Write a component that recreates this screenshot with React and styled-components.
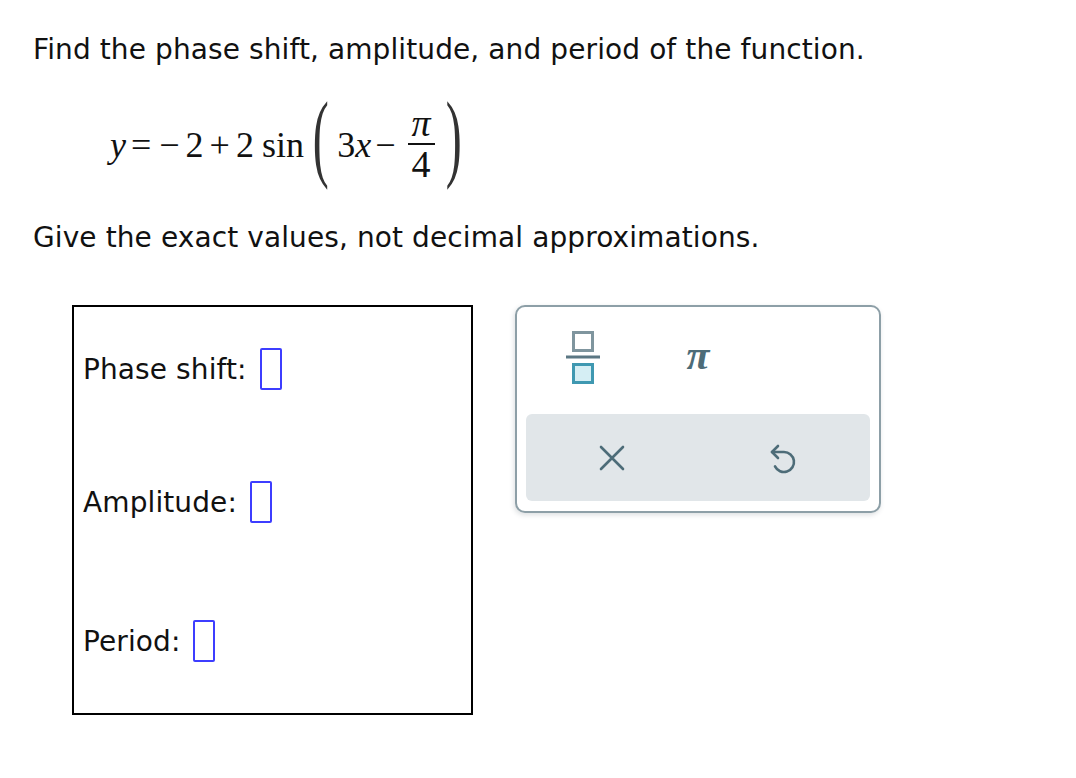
import React from 'react';
import styled, { createGlobalStyle } from 'styled-components';

const GlobalStyle = createGlobalStyle`
  html, body {
    margin: 0;
    padding: 0;
    background: #fff;
  }
`;

const Page = styled.div`
  padding: 33px 0 40px 33px;
  font-family: "DejaVu Sans", Verdana, sans-serif;
  color: #111;
`;

const Prompt = styled.p`
  margin: ${props => props.$top || 0}px 0 0;
  font-size: 28px;
  letter-spacing: 0.1px;
  line-height: 34px;
`;

const Equation = styled.div`
  display: flex;
  align-items: center;
  height: 95px;
  margin-top: 30px;
  padding-left: 77px;
  font-family: "Liberation Serif", "Times New Roman", serif;
  font-size: 36px;
  line-height: 40px;
  color: #111;
`;

const Sym = styled.span`
  display: inline-block;
  font-style: ${props => (props.$italic ? 'italic' : 'normal')};
  margin: 0 ${props => props.$r || 0}px 0 ${props => props.$l || 0}px;
`;

const Paren = styled.span`
  display: inline-block;
  font-size: 40px;
  transform: translateY(-8px) scale(1.2, 2.45);
  margin: 0 ${props => props.$r || 0}px 0 ${props => props.$l || 0}px;
  color: #333;
`;

const Frac = styled.span`
  display: inline-flex;
  flex-direction: column;
  align-items: center;
  margin: 0 6px 2px 12px;
  font-size: 38px;
  line-height: 34px;
`;

const FracBar = styled.span`
  width: 27px;
  height: 1.5px;
  margin: 3px 0 2px;
  background: #111;
`;

const Workspace = styled.div`
  display: flex;
  align-items: flex-start;
  gap: 42px;
  margin: 50px 0 0 39px;
`;

const AnswerBox = styled.div`
  box-sizing: border-box;
  width: 401px;
  height: 410px;
  border: 2px solid #000;
  padding: 41px 0 0 9px;
`;

const AnswerRow = styled.div`
  display: flex;
  align-items: center;
  gap: 13px;
  margin-top: ${props => props.$top || 0}px;
  font-size: 28px;
  letter-spacing: 0.1px;
`;

const Blank = styled.span`
  display: inline-block;
  box-sizing: border-box;
  width: 22px;
  height: 42px;
  border: 2px solid #3d3dff;
  border-radius: 2px;
`;

const Keypad = styled.div`
  box-sizing: border-box;
  width: 366px;
  border: 2px solid #8d9fa7;
  border-radius: 10px;
  padding: 0 9px 10px;
  background: #fff;
  box-shadow: -1px 2px 5px rgba(60, 80, 90, 0.18);
`;

const KeyRow = styled.div`
  display: grid;
  grid-template-columns: repeat(${props => props.$cols}, 1fr);
  align-items: center;
  height: ${props => props.$h}px;
  margin-bottom: ${props => props.$gap || 0}px;
  border-radius: 6px;
  background: ${props => props.$bg || 'transparent'};
`;

const Key = styled.button`
  display: flex;
  align-items: center;
  justify-content: center;
  height: 100%;
  padding: 0;
  border: none;
  background: transparent;
  color: #4d6c78;
  cursor: pointer;
`;

const PiGlyph = styled.span`
  font-family: "Liberation Serif", "Times New Roman", serif;
  font-style: italic;
  font-weight: bold;
  font-size: 42px;
  line-height: 1;
  color: #4d6c78;
  margin-top: -4px;
`;

const FractionIcon = () => (
  <svg width="34" height="55" viewBox="0 0 34 55">
    <rect x="7.5" y="2.5" width="19" height="18" fill="#fff" stroke="#7f959e" strokeWidth="3" />
    <rect x="0" y="25.5" width="34" height="3" fill="#5b7783" />
    <rect x="7.5" y="34.5" width="19" height="18" fill="#d5eef4" stroke="#3f98b1" strokeWidth="3" />
  </svg>
);

const ClearIcon = () => (
  <svg width="26" height="26" viewBox="0 0 26 26" fill="none" stroke="#4d6c78" strokeWidth="2.6" strokeLinecap="round">
    <path d="M2 2 L24 24 M24 2 L2 24" />
  </svg>
);

const UndoIcon = () => (
  <svg width="30" height="34" viewBox="0 0 30 34" fill="none" stroke="#4d6c78" strokeWidth="2.6" strokeLinecap="round" strokeLinejoin="round">
    <path d="M9 5 L3 11 L9 17" />
    <path d="M3 11 H15 A10 10 0 1 1 6 25.4" />
  </svg>
);

export default function App() {
  return (
    <>
      <GlobalStyle />
      <Page>
        <Prompt>Find the phase shift, amplitude, and period of the function.</Prompt>

        <Equation>
          <Sym $italic>y</Sym>
          <Sym $l={5} $r={8}>=</Sym>
          <Sym $r={6}>−</Sym>
          <Sym>2</Sym>
          <Sym $l={6} $r={6}>+</Sym>
          <Sym>2</Sym>
          <Sym $l={8}>sin</Sym>
          <Paren $l={10} $r={10}>(</Paren>
          <Sym>3</Sym>
          <Sym $italic>x</Sym>
          <Sym $l={4}>−</Sym>
          <Frac>
            <Sym $italic>π</Sym>
            <FracBar />
            <span>4</span>
          </Frac>
          <Paren $l={6}>)</Paren>
        </Equation>

        <Prompt $top={29}>Give the exact values, not decimal approximations.</Prompt>

        <Workspace>
          <AnswerBox>
            <AnswerRow>
              <span>Phase shift:</span>
              <Blank />
            </AnswerRow>
            <AnswerRow $top={91}>
              <span>Amplitude:</span>
              <Blank />
            </AnswerRow>
            <AnswerRow $top={97}>
              <span>Period:</span>
              <Blank />
            </AnswerRow>
          </AnswerBox>

          <Keypad>
            <KeyRow $cols={3} $h={100} $gap={7}>
              <Key aria-label="fraction"><FractionIcon /></Key>
              <Key aria-label="pi"><PiGlyph>π</PiGlyph></Key>
              <span />
            </KeyRow>
            <KeyRow $cols={2} $h={87} $bg="#e1e6e9">
              <Key aria-label="clear"><ClearIcon /></Key>
              <Key aria-label="undo"><UndoIcon /></Key>
            </KeyRow>
          </Keypad>
        </Workspace>
      </Page>
    </>
  );
}
